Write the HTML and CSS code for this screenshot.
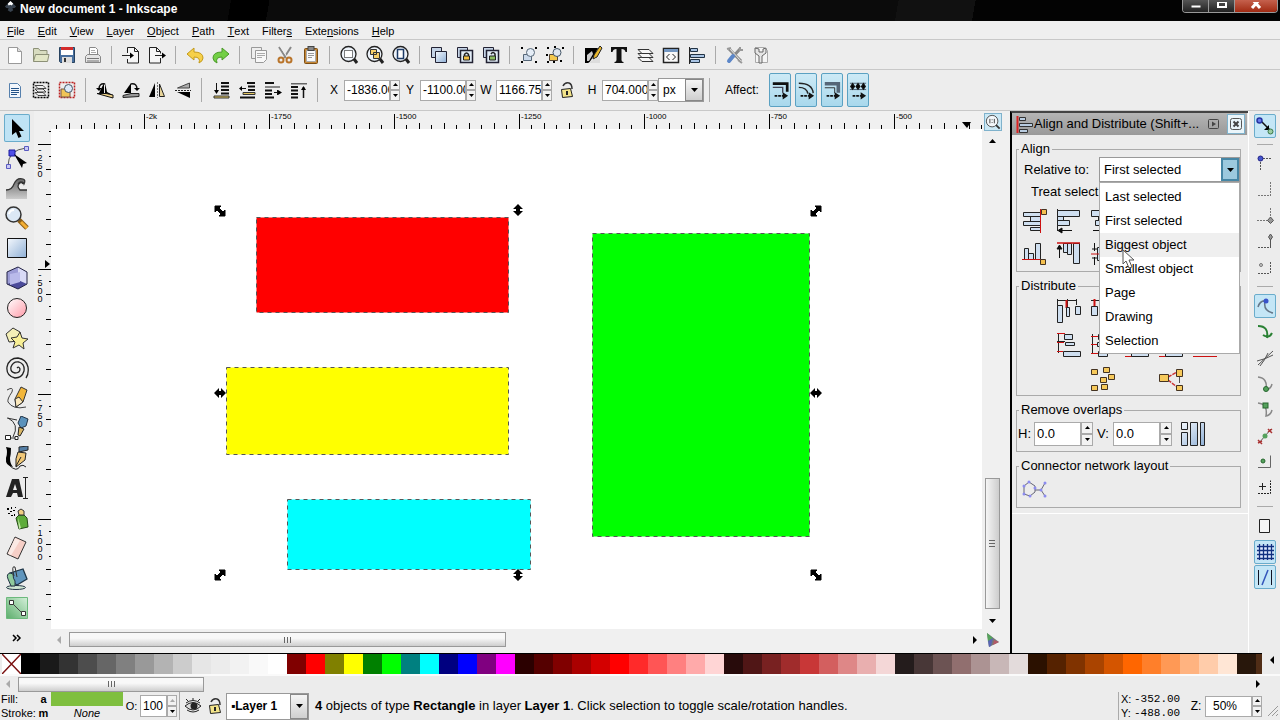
FILE: index.html
```html
<!DOCTYPE html>
<html lang="en">
<head>
<meta charset="utf-8">
<title>New document 1 - Inkscape</title>
<link rel="stylesheet" href="styles.css">
</head>
<body>
<svg class="defs" width="0" height="0" aria-hidden="true">
  <defs>
    <linearGradient id="gBlue" x1="0" y1="0" x2="1" y2="1"><stop offset="0" stop-color="#f4f8fd"/><stop offset="1" stop-color="#8fb0d6"/></linearGradient>
    <linearGradient id="gPink" x1="0" y1="0" x2="1" y2="1"><stop offset="0" stop-color="#fff"/><stop offset="1" stop-color="#ff9aa8"/></linearGradient>
    <linearGradient id="gGray" x1="0" y1="0" x2="0" y2="1"><stop offset="0" stop-color="#666"/><stop offset="1" stop-color="#ccc"/></linearGradient>
    <linearGradient id="gGreen" x1="0" y1="1" x2="1" y2="0"><stop offset="0" stop-color="#5cae6c"/><stop offset="1" stop-color="#d5f0da"/></linearGradient>
    <pattern id="hticks" x="93" y="0" width="125" height="18" patternUnits="userSpaceOnUse">
      <path d="M0 3h1v15h-1zM12 14h1v4h-1zM25 12h1v6h-1zM37 14h1v4h-1zM50 12h1v6h-1zM62 14h1v4h-1zM75 12h1v6h-1zM87 14h1v4h-1zM100 12h1v6h-1zM112 14h1v4h-1z"/>
    </pattern>
    <pattern id="vticks" x="0" y="15" width="17" height="125" patternUnits="userSpaceOnUse">
      <path d="M4 0h13v1h-13zM15 12h2v1h-2zM12 25h5v1h-5zM15 37h2v1h-2zM12 50h5v1h-5zM15 62h2v1h-2zM12 75h5v1h-5zM15 87h2v1h-2zM12 100h5v1h-5zM15 112h2v1h-2z"/>
    </pattern>
  </defs>
  <symbol id="logo" viewBox="0 0 14 14"><path d="M7 1L13 7Q12 9 9 9L10 11L7 13L4 11L5 9Q2 9 1 7z" fill="#39434f"/><path d="M7 1L10 4L8 6L7 5L5 6L4 4z" fill="#fff"/></symbol>
  <symbol id="new" viewBox="0 0 20 20"><path d="M3.500 2.500h9l4 4v12h-13z" fill="#fff" stroke="#999"/><path d="M12.500 2.500v4h4" fill="#ddd" stroke="#999"/></symbol>
  <symbol id="open" viewBox="0 0 20 20"><path d="M2.500 16.500v-13h5l1.500 2h7v4" fill="#d8dcc0" stroke="#8c9077"/><path d="M4.500 9.500h13.500l-1.500 7h-14z" fill="#e2e6c6" stroke="#8c9077"/></symbol>
  <symbol id="save" viewBox="0 0 20 20"><path d="M2.500 2.500h15v15h-14l-1-1z" fill="#486f9e" stroke="#27425f"/><path d="M4 2h12v8h-12z" fill="#fff"/><path d="M4 2h12v3h-12z" fill="#d32b2b"/><path d="M5 12h10v6h-10z" fill="#ddd"/><path d="M7 13h2v4h-2z" fill="#333"/></symbol>
  <symbol id="print" viewBox="0 0 20 20"><path d="M6.500 10v-7.500h6l2 2v5.500" fill="#fff" stroke="#888"/><path d="M8 5.500h4M8 7.500h5" stroke="#aaa"/><path d="M2.500 11.500l2-2h11l2 2v6h-15z" fill="#e5e5e5" stroke="#888"/><path d="M4 13.500h12M4 16h12" stroke="#777"/></symbol>
  <symbol id="import" viewBox="0 0 20 20"><path d="M6.500 8v-5.500h7l4 4v11.500h-11v-4" fill="#f5f5f5" stroke="#222"/><path d="M13.500 2.500v4h4M1 10.500h10" fill="none" stroke="#222"/><path d="M9 7.500l4 3l-4 3z"/></symbol>
  <symbol id="export" viewBox="0 0 20 20"><path d="M13.500 13v5h-11v-15.500h7l4 4v2" fill="#f5f5f5" stroke="#222"/><path d="M9.500 2.500v4h4M8 10.500h9" fill="none" stroke="#222"/><path d="M15 7.500l4 3l-4 3z"/></symbol>
  <symbol id="undo" viewBox="0 0 20 20"><path d="M2 9l7-6v4q9 0 9 6q0 3-4 5q2-6-5-6v3z" fill="#f6d04a" stroke="#c39a1a"/></symbol>
  <symbol id="redo" viewBox="0 0 20 20"><path d="M18 9l-7-6v4q-9 0-9 6q0 3 4 5q-2-6 5-6v3z" fill="#73cf45" stroke="#4a9a28"/></symbol>
  <symbol id="copy" viewBox="0 0 20 20"><path d="M2.500 2.500h10v11h-10z" fill="#eee" stroke="#999"/><path d="M6.500 5.500h11v9l-3 3h-8z" fill="#f8f8f8" stroke="#999"/><path d="M8 8.500h8M8 10.500h8M8 12.500h5" stroke="#aaa"/></symbol>
  <symbol id="cut" viewBox="0 0 20 20"><path d="M4 2l7 11M16 2l-7 11" stroke="#888" stroke-width="2"/><path d="M5 1l7 11" stroke="#eee"/><circle cx="6" cy="15" r="2.500" fill="none" stroke="#b9742a" stroke-width="2"/><circle cx="14" cy="15" r="2.500" fill="none" stroke="#b9742a" stroke-width="2"/></symbol>
  <symbol id="paste" viewBox="0 0 20 20"><rect x="3.500" y="3.500" width="13" height="15" rx="1" fill="#c48635" stroke="#7b4d13"/><path d="M5.500 5.500h9v11h-9z" fill="#fafafa" stroke="#aaa"/><path d="M7 8.500h6M7 10.500h6M7 12.500h4" stroke="#999"/><rect x="7" y="1.500" width="6" height="4" fill="#888" stroke="#444"/></symbol>
  <symbol id="lens" viewBox="0 0 20 20"><circle cx="9.500" cy="9" r="7.500" fill="#edf3fa" stroke="#222" stroke-width="1.300"/><path d="M15 14l3 4" stroke="#222" stroke-width="3"/></symbol>
  <symbol id="zoomsel" viewBox="0 0 20 20"><use href="#lens"/><rect x="5.500" y="5.500" width="8" height="7" fill="#fff" stroke="#000" stroke-dasharray="1 1"/></symbol>
  <symbol id="zoomdraw" viewBox="0 0 20 20"><use href="#lens"/><path d="M5.500 4.500h6v5h-6zM8.500 7.500h6v6h-6z" fill="#f7cf6b" stroke="#333"/></symbol>
  <symbol id="zoompage" viewBox="0 0 20 20"><use href="#lens"/><path d="M6.500 4.500h6v9h-6z" fill="#fff" stroke="#1d3b66" stroke-width="1.500"/></symbol>
  <symbol id="dup" viewBox="0 0 20 20"><path d="M2.500 2.500h10v10h-10z" fill="#c4d3e6" stroke="#223"/><path d="M6.500 6.500h11v11h-11z" fill="url(#gBlue)" stroke="#223"/></symbol>
  <symbol id="clone" viewBox="0 0 20 20"><path d="M2.500 2.500h10v10h-10z" fill="#c4d3e6" stroke="#223"/><path d="M5.500 5.500h12v12h-12z" fill="#e2ecf7" stroke="#223" stroke-width="1.500"/><path d="M9.500 11v-1.500q2-3 4 0v1.500" fill="none" stroke="#222" stroke-width="1.500"/><path d="M8.500 11h6v4h-6z" fill="#f0bd43" stroke="#222"/></symbol>
  <symbol id="unclone" viewBox="0 0 20 20"><path d="M2.500 2.500h10v10h-10z" fill="#c4d3e6" stroke="#223"/><path d="M5.500 5.500h12v12h-12z" fill="#e2ecf7" stroke="#223" stroke-width="1.500"/><path d="M10 9q2-3 4 0v2" fill="none" stroke="#222" stroke-width="1.500"/><path d="M8.500 11h6v4h-6z" fill="#8abb60" stroke="#222"/></symbol>
  <symbol id="group" viewBox="0 0 20 20"><path d="M2 2h2v2h-2zM16 2h2v2h-2zM2 16h2v2h-2zM16 16h2v2h-2z"/><path d="M4.500 9.500h8v6h-8z" fill="#cbd9ea" stroke="#567"/><circle cx="11.500" cy="7.500" r="4" fill="#e5edf6" stroke="#567"/></symbol>
  <symbol id="ungroup" viewBox="0 0 20 20"><path d="M2 2h2v2h-2zM9 1h2v2h-2zM17 2h2v2h-2zM2 16h2v2h-2zM8 16h2v2h-2zM15 15h2v2h-2zM1 9h2v2h-2z"/><path d="M4.500 9.500h8v6h-8z" fill="#f4c84d" stroke="#543"/><circle cx="12" cy="7.500" r="4" fill="#dfe6ef" stroke="#456"/></symbol>
  <symbol id="fill" viewBox="0 0 20 20"><path d="M2 3h13l-3 6l-6 9h-4z"/><path d="M4 10l5-4l1 3l-4 7h-2z" fill="#ccc"/><path d="M17 1l2 2l-5 9l-4 2l1-4z" fill="#eab92d" stroke="#222"/><path d="M5 18l12-7v7z" fill="#ddd"/></symbol>
  <symbol id="text" viewBox="0 0 20 20"><path d="M2 2h16v5h-1.500q-.5-3-4-3v11q0 2 2 2v1h-9v-1q2 0 2-2v-11q-3.500 0-4 3h-1.500z" fill="#111"/></symbol>
  <symbol id="layers" viewBox="0 0 20 20"><g fill="#f5f5f5" stroke="#333"><path d="M3 12.500h11l4 4h-11z"/><path d="M3 8.500h11l4 4h-11z"/><path d="M3 4.500h11l4 4h-11z"/></g></symbol>
  <symbol id="xml" viewBox="0 0 20 20"><path d="M2.500 3.500h15v14h-15z" fill="#f8f8f8" stroke="#222" stroke-width="1.500"/><path d="M3 4h14v3h-14z" fill="#7396c0"/><path d="M8.500 9l-3 3l3 3M11.500 9l3 3l-3 3" fill="none" stroke="#222"/></symbol>
  <symbol id="align" viewBox="0 0 20 20"><path d="M2.500 2v17" stroke="#222"/><g fill="#a9c4e4" stroke="#234"><path d="M3.500 3.500h7v3h-7zM3.500 9.500h14v3h-14zM3.500 14.500h9v3h-9z"/></g></symbol>
  <symbol id="prefs" viewBox="0 0 20 20"><path d="M4 4l12 12M15 4l-11 12" stroke="#888" stroke-width="3"/><path d="M4 3l12 13" stroke="#eee"/><path d="M8 11l-4 5" stroke="#5c87c9" stroke-width="4" stroke-linecap="round"/><path d="M15 2v3h3M13 15l4 3M2 4l4-1" fill="none" stroke="#999" stroke-width="2"/></symbol>
  <symbol id="docprefs" viewBox="0 0 20 20"><path d="M4.500 2.500h9l3 3v12h-12z" fill="#f5f5f5" stroke="#aaa"/><path d="M4 3v5l4 3v7h3v-7l4-3v-5l-3 1v3h-4v-3z" fill="#e5e5e5" stroke="#666"/></symbol>
  <symbol id="selall" viewBox="0 0 20 20"><path d="M4.500 3.500h8l3 3v11h-11z" fill="#f1f6fc" stroke="#5680ad"/><path d="M6 8.500h8M6 10.500h8M6 12.500h8M6 14.500h6" stroke="#225288"/></symbol>
  <symbol id="sellayer" viewBox="0 0 20 20"><rect x="2.500" y="2.500" width="15" height="15" fill="none" stroke="#000" stroke-width="1.500" stroke-dasharray="2 1"/><g fill="#eee" stroke="#444"><path d="M4 12.500h8l3 3h-8zM4 9h8l3 3h-8zM4 5.500h8l3 3h-8z"/></g></symbol>
  <symbol id="desel" viewBox="0 0 20 20"><rect x="2.500" y="2.500" width="15" height="15" fill="none" stroke="#b22" stroke-width="1.500" stroke-dasharray="2 1"/><path d="M4 9h9v8h-9z" fill="#f0c456" stroke="#754"/><circle cx="11.500" cy="8.500" r="4" fill="#dce9f8" stroke="#456"/></symbol>
  <symbol id="rotl" viewBox="0 0 20 20"><path d="M9 3v10h-5zM10 3l2 9l6 3l-8-1z"/><path d="M2 13.500h9l7 1.500v3z" fill="#f1d58a" stroke="#111"/><path d="M10 4q-6-1-6 5" fill="none" stroke="#111" stroke-width="1.500"/><path d="M1 8h6l-3 3z"/></symbol>
  <symbol id="rotr" viewBox="0 0 20 20"><path d="M10 3v10h-7z"/><path d="M2 17.500v-2l8-2h8v3z" fill="#999" stroke="#222"/><path d="M10 4q6-1 6 5" fill="none" stroke="#111" stroke-width="1.500"/><path d="M13 8h6l-3 3z"/></symbol>
  <symbol id="fliph" viewBox="0 0 20 20"><path d="M8 3v14h-6z"/><path d="M10.500 2v16" stroke="#777" stroke-dasharray="2 1"/><path d="M12.500 4v12.500h5z" fill="#e8d498" stroke="#222"/></symbol>
  <symbol id="flipv" viewBox="0 0 20 20"><path d="M16.500 3v5h-12z" fill="#aaa" stroke="#444"/><path d="M2 10.500h16" stroke="#222" stroke-dasharray="2 1"/><path d="M17 18v-6h-13z"/></symbol>
  <symbol id="bottom" viewBox="0 0 20 20"><path d="M10 3h8M10 6.500h8M10 10h8M10 13.500h8" stroke="#111" stroke-width="2"/><path d="M3 16h15v2h-15z" fill="#e3c75f" stroke="#333"/><path d="M5.500 3v9" stroke="#111"/><path d="M3 10h5l-2.500 4z"/></symbol>
  <symbol id="lower" viewBox="0 0 20 20"><path d="M10 3h8M11 6.500h7M11 10h7M3 17.500h15" stroke="#111" stroke-width="2"/><path d="M6 12.500h12v2h-12z" fill="#e3c75f" stroke="#333"/><path d="M4 8.500h5" stroke="#111"/><path d="M5 6l-3 2.500l3 2.500z"/></symbol>
  <symbol id="raise" viewBox="0 0 20 20"><path d="M2 3h9M2 10.500h7M2 14h7M2 17.500h9" stroke="#111" stroke-width="2"/><path d="M2 6h15v2h-15z" fill="#888"/><path d="M11 12.500h6M14.500 10v5" stroke="#111"/><path d="M15 10l4 2.500l-4 2.500z"/></symbol>
  <symbol id="top" viewBox="0 0 20 20"><path d="M2 7h7M2 10.500h7M2 14h7M2 17.500h7" stroke="#111" stroke-width="2"/><path d="M2 3h16v1.500h-16z" fill="#666"/><path d="M14.500 7v11" stroke="#111" stroke-width="1.500"/><path d="M12 10h5l-2.500-4z"/></symbol>
  <symbol id="lock" viewBox="0 0 20 20"><path d="M6 6q2-4 6-3q3 1 3 6" fill="none" stroke="#333" stroke-width="1.500"/><path d="M4.500 9.500l9-1l2 8l-10 1z" fill="#f4e58a" stroke="#222"/><path d="M10 11v4" stroke="#222" stroke-width="2"/></symbol>
  <symbol id="aff1" viewBox="0 0 20 24"><path d="M2 5h16v9" fill="none" stroke="#111" stroke-width="3"/><path d="M2 9h11v6" fill="none" stroke="#445" stroke-width="1.500"/><use href="#affarrow"/></symbol>
  <symbol id="aff2" viewBox="0 0 20 24"><path d="M2 4.500q15 0 16 11M2 9q9 0 10 7" fill="none" stroke="#222" stroke-width="1.500"/><use href="#affarrow"/></symbol>
  <symbol id="aff3" viewBox="0 0 20 24"><path d="M2 5h15v10" fill="none" stroke="#567" stroke-width="4"/><path d="M2 9.500h11v6" fill="none" stroke="#222"/><use href="#affarrow"/></symbol>
  <symbol id="aff4" viewBox="0 0 20 24"><path d="M1 4.500h18M1 11.500h18" stroke="#456"/><path d="M4 5l2 3l-2 3l-2-3zM10 5l2 3l-2 3l-2-3zM16 5l2 3l-2 3l-2-3z" stroke="#111" stroke-width="1.500"/><use href="#affarrow"/></symbol>
  <symbol id="affarrow" viewBox="0 0 20 24"><path d="M4 18.500h10" stroke="#111" stroke-width="2" stroke-dasharray="3 1"/><path d="M13 14.500l6 4l-6 4z" fill="#111"/></symbol>

  <symbol id="tselect" viewBox="0 0 24 24"><path d="M7 3v16l4-3l2.500 6l3-1.500l-2.500-5.500h5z"/></symbol>
  <symbol id="tnode" viewBox="0 0 24 24"><path d="M3 20q0-16 18-18" fill="none" stroke="#555"/><path d="M1.500 18.500h4v4h-4zM19.500 .5h4v4h-4z" fill="#c9c9f4" stroke="#5a5ac0"/><path d="M4 4h6v6h-6z" fill="#5151e8" stroke="#1a1a9d"/><path d="M9 8l13 9l-4 1l-1 4z"/></symbol>
  <symbol id="ttweak" viewBox="0 0 24 24"><path d="M1 14q6 0 8-6q3-7 9-5q3 1 1 5q-1-3-4-1q-4 3 0 7h7v9h-21z" fill="url(#gGray)"/><path d="M1 14q6 0 8-6q3-7 9-5q3 1 1 5q-1-3-4-1q-4 3 0 7h7M13 8q3-4 5 0" fill="none" stroke="#333" stroke-width="1.300"/></symbol>
  <symbol id="tzoom" viewBox="0 0 24 24"><path d="M14 14l8 8" stroke="#8b5d16" stroke-width="5"/><path d="M16 16l6 6" stroke="#f3ae33" stroke-width="3"/><circle cx="8.500" cy="8.500" r="7.500" fill="#dce8f5" stroke="#333" stroke-width="1.500"/><path d="M4 8q1-4 5-4" fill="none" stroke="#fff" stroke-width="2"/></symbol>
  <symbol id="trect" viewBox="0 0 24 24"><path d="M2.500 2.500h19v19h-19z" fill="url(#gBlue)" stroke="#111"/></symbol>
  <symbol id="tbox" viewBox="0 0 24 24"><path d="M2 6l11-5v13l-11 4z" fill="#9d9dd6"/><path d="M13 1l9 5v12l-9-4z" fill="#d9daf6"/><path d="M2 18l11-4l9 4l-9 5z" fill="#4c4b9b"/><path d="M5 8l10-2v10l-10 3z" fill="#b9baea"/><path d="M13 1l9 5v12l-9 5l-11-5v-12z" fill="none" stroke="#224"/></symbol>
  <symbol id="tcircle" viewBox="0 0 24 24"><circle cx="12" cy="12" r="9.500" fill="url(#gPink)" stroke="#222"/></symbol>
  <symbol id="tstar" viewBox="0 0 24 24"><path d="M8 2l7 4l-2 9l-9 1l-3-8z" fill="#f4efb7" stroke="#333"/><path d="M15 6l2 6l6 1l-5 4l1 6l-5-4l-6 3l2-6l-4-4l6-1z" fill="#f8ef94" stroke="#333"/></symbol>
  <symbol id="tspiral" viewBox="0 0 24 24"><path d="M12 12q2-2 3 1q0 4-5 4q-5-1-4-6q2-6 8-5q6 2 5 9q-2 7-9 7q-9-2-8-11q2-9 11-9q8 1 10 9q1 7-2 11" fill="none" stroke="#222" stroke-width="1.300"/></symbol>
  <symbol id="tpencil" viewBox="0 0 24 24"><path d="M2 4q7-4 5 2q-5 7-4 10q5 8 18 5" fill="none" stroke="#444"/><path d="M16 1l6 3l-4 12l-7 5l-1-8z" fill="#f2b63a" stroke="#333"/><path d="M10 13l4-2l4 5l-7 5z" fill="#fbe8bc" stroke="#333"/></symbol>
  <symbol id="tpen" viewBox="0 0 24 24"><path d="M2 2l10 2M3 2q12 6 5 19M3 22h9" fill="none" stroke="#333"/><path d="M.5 19.500h5v4h-5zM10 20.500h3v3h-3z" fill="#fff" stroke="#222"/><path d="M16 0l7 3l-2 7l-5 2l-3-5z" fill="#5b92bb" stroke="#234"/><path d="M14 11l5 2l-4 7l-2-1z" fill="#d9b665" stroke="#222"/></symbol>
  <symbol id="tcallig" viewBox="0 0 24 24"><path d="M1 1l5 1q0 6-1 10q0 6 3 9q-8-1-7-9q2-6 0-11z"/><path d="M4 19q8 8 11 1q3-2 6 1" fill="none" stroke="#222"/><path d="M14 1l9-1v4l-9 2z" fill="#547ea5" stroke="#222"/><path d="M13 6l8 1l-1 7l-9 7q-1-9 2-15z" fill="#f1c878" stroke="#222"/><path d="M11 20l5-9" stroke="#222"/></symbol>
  <symbol id="ttext" viewBox="0 0 24 24"><path d="M7 3h7l4 18h-5l-1-4h-4l-2 4h-5zM10 8l-2 6h4z" fill="#222" fill-rule="evenodd"/><path d="M18 1.500h5M20.500 2v20M18 22.500h5" stroke="#222"/></symbol>
  <symbol id="tspray" viewBox="0 0 24 24"><path d="M2 2h2v2h-2zM6 1h1v2h-1zM3 7h2v1h-2zM8 4h2v1h-2zM5 5h2v1h-2zM9 8h1v2h-1zM6 9h2v1h-2zM10 1h1v1h-1z"/><path d="M11 12l3-3h5l3 3l1 9l-9 2z" fill="#5eac3b" stroke="#254b18"/><path d="M13 12l3 10l-2 1z" fill="#c4eaa8"/><path d="M13 5l3-2l3 2v4h-5z" fill="#f1cf83" stroke="#333"/></symbol>
  <symbol id="teraser" viewBox="0 0 24 24"><path d="M10 1l11 5l-8 17l-11-5z" fill="#f6cfc7" stroke="#333"/><path d="M10 2l5 2.500l-9 15l-3-2z" fill="#fbe9e4"/></symbol>
  <symbol id="tbucket" viewBox="0 0 24 24"><ellipse cx="11" cy="21.500" rx="9.500" ry="2" fill="#cfe6d3" stroke="#234"/><path d="M5 7l13-4l4 10l-10 6q-6-3-7-12z" fill="#5f95bd" stroke="#1e3547" stroke-width="1.300"/><path d="M5 7q-4 1-2 6l3 7h4q0-3 0-5q-2-2-2-7z" fill="#8fcb9c" stroke="#234"/><path d="M9 10q-3-11 1-9l2 10" fill="none" stroke="#333"/></symbol>
  <symbol id="tconn" viewBox="0 0 24 24"><path d="M1.500 1.500h21v21h-21z" fill="url(#gGreen)" stroke="#6cb97c"/><path d="M7 7l10 10" stroke="#444"/><path d="M4.500 4.500h4v4h-4zM16.500 15.500h4v4h-4z" fill="#fff" stroke="#333"/></symbol>

  <symbol id="snap" viewBox="0 0 20 20"><path d="M6 5l9 9" stroke="#111" stroke-width="1.500"/><path d="M14 9v5h-5z"/><circle cx="4.500" cy="4.500" r="2.500" fill="#6a7de8" stroke="#2534a2" stroke-width="1.500"/><circle cx="15.500" cy="15.500" r="2.500" fill="#9ccda4" stroke="#387747"/></symbol>
  <symbol id="s1" viewBox="0 0 20 20"><path d="M5.500 5v12M5 4.500h12" stroke="#555" stroke-dasharray="2 1"/><circle cx="5.500" cy="4.500" r="2.500" fill="#45c" stroke="#228"/></symbol>
  <symbol id="s2" viewBox="0 0 20 20"><path d="M3 15.500h12M15.500 2v14" stroke="#777" stroke-dasharray="2 1"/></symbol>
  <symbol id="s3" viewBox="0 0 20 20"><path d="M2 14.500h13M15.500 2v13" stroke="#777" stroke-dasharray="2 1"/><path d="M15.500 11l3 3.500l-3 3l-3-3z" fill="#999" stroke="#555"/></symbol>
  <symbol id="s4" viewBox="0 0 20 20"><path d="M3 15.500h12" stroke="#555" stroke-dasharray="2 1"/><path d="M15.500 7v9" stroke="#555"/><path d="M15.500 2l2 3l-2 3l-2-3z" fill="#999" stroke="#555"/></symbol>
  <symbol id="s5" viewBox="0 0 20 20"><path d="M3 15.500h12M15.500 4v12" stroke="#555" stroke-dasharray="2 1"/><circle cx="6" cy="7" r="1.500" fill="#ccc" stroke="#777"/></symbol>
  <symbol id="s6" viewBox="0 0 20 20"><path d="M3 11q2-7 8-6M10 5q-2 10 8 12" fill="none" stroke="#678" stroke-width="1.500"/><circle cx="11" cy="5" r="2.500" fill="#3953ca"/></symbol>
  <symbol id="s7" viewBox="0 0 20 20"><path d="M3 4q11 0 9 12M8 13q6 4 9-2" fill="none" stroke="#2a8134" stroke-width="2"/></symbol>
  <symbol id="s8" viewBox="0 0 20 20"><path d="M3 17l15-14M2 13q9-2 16-6M5 18q5-6 8-13" fill="none" stroke="#555"/></symbol>
  <symbol id="s9" viewBox="0 0 20 20"><path d="M3 3q10 1 8 13q5-1 6-6" fill="none" stroke="#888" stroke-width="1.500"/><circle cx="11" cy="15" r="2.500" fill="#54a15c" stroke="#27662e"/></symbol>
  <symbol id="s10" viewBox="0 0 20 20"><path d="M3 3q10 1 8 13q5-1 6-6" fill="none" stroke="#888" stroke-width="1.500"/><rect x="8" y="3" width="5" height="5" fill="#54a15c" stroke="#27662e"/></symbol>
  <symbol id="s11" viewBox="0 0 20 20"><path d="M4 17l12-14" stroke="#555"/><path d="M3 14l4 4M3 17l4-2M13 3l4 4M13 6l4-3" stroke="#a33" stroke-width="1.500"/><circle cx="10" cy="10" r="2.500" fill="#54a15c"/></symbol>
  <symbol id="s12" viewBox="0 0 20 20"><path d="M3 15.500h12.500v-12" fill="none" stroke="#666"/><circle cx="8" cy="9" r="2" fill="#54a15c" stroke="#27662e"/></symbol>
  <symbol id="s13" viewBox="0 0 20 20"><path d="M3 15.500h12.500v-13" fill="none" stroke="#222" stroke-dasharray="2 1"/><path d="M4 8.500h7M7.500 5v7" stroke="#222"/></symbol>
  <symbol id="s14" viewBox="0 0 20 20"><path d="M4.500 3.500h10v13h-10z" fill="#f5f5f5" stroke="#222"/></symbol>
  <symbol id="s15" viewBox="0 0 20 20"><path d="M2 3h16v15h-16z" fill="#dfe9ff"/><path d="M4.500 2v16M8.500 2v16M12.500 2v16M16.500 2v16M2 4.500h17M2 8.500h17M2 12.500h17M2 16.500h17" stroke="#103080" stroke-width="1.300"/></symbol>
  <symbol id="s16" viewBox="0 0 20 20"><path d="M3.500 3v15M16.500 3v15" stroke="#112"/><path d="M7 18l6-15" stroke="#35b" stroke-width="1.500"/></symbol>

  <symbol id="a1" viewBox="0 0 26 26"><g fill="#cfdff0" stroke="#222"><path d="M1.500 4.500h17v4h-17zM8.500 8.500h10v5h-10zM1.500 13.500h17v4h-17zM8.500 19.500h10v3h-10z"/></g><path d="M18.500 1v24" stroke="#c11"/><path d="M19.500 1.500h5v5h-5z" fill="#f4c04e" stroke="#432"/></symbol>
  <symbol id="a2" viewBox="0 0 26 26"><path d="M1.500 1v22" stroke="#222"/><g fill="#cfdff0" stroke="#222"><path d="M1.500 2.500h22v6h-22zM1.500 8.500h6v4h-6zM1.500 12.500h12v5h-12z"/></g><path d="M3 22.500h13M6 20l-4 2.500l4 2.500z" stroke="#111"/></symbol>
  <symbol id="a3" viewBox="0 0 26 26"><path d="M12.500 1v24" stroke="#c11"/><g fill="#cfdff0" stroke="#222"><path d="M1.500 2.500h22v6h-22zM8.500 8.500h8v4h-8zM5.500 12.500h14v5h-14z"/></g><path d="M3 22.500h20" stroke="#111"/></symbol>
  <symbol id="a4" viewBox="0 0 26 26"><g fill="#cfdff0" stroke="#222"><path d="M2.500 7.500h4v11h-4zM6.500 12.500h5v6h-5zM13.500 2.500h5v16h-5z"/></g><path d="M0 18.500h20" stroke="#c11"/><path d="M18.500 18.500h5v5h-5z" fill="#f4c04e" stroke="#432"/></symbol>
  <symbol id="a5" viewBox="0 0 26 26"><g fill="#cfdff0" stroke="#222"><path d="M7.500 2.500h4v9h-4zM11.500 2.500h4v11h-4zM17.500 2.500h6v20h-6z"/></g><path d="M1 2h23" stroke="#c11" stroke-width="1.500"/><path d="M3.500 5v12M1 8l2.500-4l2.500 4z" stroke="#111"/></symbol>
  <symbol id="a6" viewBox="0 0 26 26"><g fill="#cfdff0" stroke="#222"><path d="M7.500 6.500h5v13h-5zM17.500 2.500h5v20h-5z"/></g><path d="M1 13h23" stroke="#c11"/><path d="M4.500 2v8M4.500 16v8M2 8h5M2 17h5" stroke="#111"/></symbol>
  <symbol id="d1" viewBox="0 0 26 26"><path d="M1.500 1v8M11.500 1v8M20.500 1v6M1 2.500h19" stroke="#222"/><path d="M10.500 2v8" stroke="#c11" stroke-width="2"/><g fill="#cfdff0" stroke="#222"><path d="M1.500 7.500h5v17h-5zM10.500 9.500h3v9h-3zM19.500 8.500h5v8h-5z"/></g></symbol>
  <symbol id="d2" viewBox="0 0 26 26"><path d="M1 2.500h22M20.500 1v8" stroke="#222"/><path d="M4.500 1v12" stroke="#c11" stroke-width="2"/><g fill="#cfdff0" stroke="#222"><path d="M1.500 8.500h6v9h-6zM17.500 8.500h6v14h-6z"/></g></symbol>
  <symbol id="d3" viewBox="0 0 26 26"><path d="M2.500 1v20M1 1.500h6M1 9.500h8" stroke="#222"/><path d="M1 1.500h8M1 10.500h7M1 19.500h6" stroke="#c11"/><g fill="#cfdff0" stroke="#222"><path d="M8.500 2.500h8v5h-8zM9.500 10.500h9v3h-9zM7.500 19.500h17v5h-17z"/></g></symbol>
  <symbol id="d4" viewBox="0 0 26 26"><path d="M2.500 2v20" stroke="#222"/><path d="M1 4.500h22M1 12.500h22M1 21.500h22" stroke="#c11"/><g fill="#cfdff0" stroke="#222"><path d="M8.500 2.500h8v5h-8zM7.500 10.500h9v4h-9zM8.500 19.500h9v5h-9z"/></g></symbol>
  <symbol id="d5" viewBox="0 0 26 26"><path d="M1 24.500h8" stroke="#c11"/><path d="M7.500 19.500h17v5h-17z" fill="#cfdff0" stroke="#222"/></symbol>
  <symbol id="d6" viewBox="0 0 26 26"><path d="M1 24.500h24" stroke="#c11"/></symbol>
  <symbol id="rnd" viewBox="0 0 26 26"><g fill="#f6c95b" stroke="#432"><path d="M1.500 3.500h6v5h-6zM13.500 1.500h6v5h-6zM18.500 8.500h6v5h-6zM10.500 11.500h6v5h-6zM1.500 19.500h6v5h-6zM11.500 18.500h6v5h-6z"/></g></symbol>
  <symbol id="uncl" viewBox="0 0 26 26"><path d="M10 11l9-5M10 14l9 7" stroke="#c33" stroke-width="1.500" stroke-dasharray="4 1"/><path d="M21.500 11v6" stroke="#555"/><g fill="#f6c95b" stroke="#432"><path d="M1.500 8.500h9v7h-9zM18.500 3.500h6v7h-6zM18.500 19.500h6v5h-6z"/></g></symbol>
  <symbol id="ovl" viewBox="0 0 26 26"><g fill="url(#gBlue)" stroke="#222"><path d="M1.500 1.500h6v7h-6zM1.500 11.500h6v13h-6zM10.500 1.500h7v23h-7zM20.500 1.500h4v23h-4z"/></g></symbol>
  <symbol id="net" viewBox="0 0 26 26"><path d="M2 9l5-4l6 4v6l-5 4l-6-2zM13 13h6l4-7M19 13l4 6" fill="none" stroke="#667"/><g fill="#8c8cf0"><circle cx="2" cy="9" r="1.500"/><circle cx="7" cy="5" r="1.500"/><circle cx="13" cy="11" r="1.500"/><circle cx="8" cy="19" r="1.500"/><circle cx="2" cy="17" r="1.500"/><circle cx="19" cy="13" r="1.500"/><circle cx="23" cy="6" r="1.500"/><circle cx="23" cy="19" r="1.500"/></g></symbol>
  <symbol id="eye" viewBox="0 0 20 20"><path d="M2 10q8-7 16 0q-8 8-16 0z" fill="#ddd" stroke="#222"/><circle cx="11" cy="10" r="3.500" fill="#222"/><path d="M3 7q7-5 14 0M4 14q6 4 12 0M5 5l-2-2M10 4v-2M15 5l2-2" fill="none" stroke="#222"/></symbol>
  <symbol id="up" viewBox="0 0 7 4"><path d="M3.500 0L7 4H0z"/></symbol>
  <symbol id="down" viewBox="0 0 7 4"><path d="M0 0H7L3.500 4z"/></symbol>
  <symbol id="left" viewBox="0 0 4 8"><path d="M4 0V8L0 4z"/></symbol>
  <symbol id="right" viewBox="0 0 4 8"><path d="M0 0V8L4 4z"/></symbol>
</svg>

<header class="titlebar">
  <svg class="logo"><use href="#logo"/></svg>
  <h1>New document 1 - Inkscape</h1>
  <div class="winbtns">
    <button aria-label="Minimize"><svg width="12" height="8"><path d="M1.500 3.500h9v2h-9z" fill="#fff"/></svg></button>
    <button aria-label="Maximize"><svg width="12" height="8"><path d="M2 0h8v5h-8z" fill="none" stroke="#fff" stroke-width="2"/></svg></button>
    <button class="close" aria-label="Close"><svg width="14" height="8"><path d="M3 -3l8 9M11 -3l-8 9" stroke="#fff" stroke-width="3"/></svg></button>
  </div>
</header>

<nav class="menubar">
  <button><u>F</u>ile</button><button><u>E</u>dit</button><button><u>V</u>iew</button><button><u>L</u>ayer</button><button><u>O</u>bject</button><button><u>P</u>ath</button><button><u>T</u>ext</button><button>Filter<u>s</u></button><button>Exte<u>n</u>sions</button><button><u>H</u>elp</button>
</nav>

<div class="toolbar commands">
  <button aria-label="New"><svg><use href="#new"/></svg></button>
  <button aria-label="Open"><svg><use href="#open"/></svg></button>
  <button aria-label="Save"><svg><use href="#save"/></svg></button>
  <button aria-label="Print"><svg><use href="#print"/></svg></button>
  <i class="sep"></i>
  <button aria-label="Import"><svg><use href="#import"/></svg></button>
  <button aria-label="Export"><svg><use href="#export"/></svg></button>
  <i class="sep"></i>
  <button aria-label="Undo"><svg><use href="#undo"/></svg></button>
  <button aria-label="Redo"><svg><use href="#redo"/></svg></button>
  <i class="sep"></i>
  <button aria-label="Copy"><svg><use href="#copy"/></svg></button>
  <button aria-label="Cut"><svg><use href="#cut"/></svg></button>
  <button aria-label="Paste"><svg><use href="#paste"/></svg></button>
  <i class="sep"></i>
  <button aria-label="Zoom selection"><svg><use href="#zoomsel"/></svg></button>
  <button aria-label="Zoom drawing"><svg><use href="#zoomdraw"/></svg></button>
  <button aria-label="Zoom page"><svg><use href="#zoompage"/></svg></button>
  <i class="sep"></i>
  <button aria-label="Duplicate"><svg><use href="#dup"/></svg></button>
  <button aria-label="Clone"><svg><use href="#clone"/></svg></button>
  <button aria-label="Unlink clone"><svg><use href="#unclone"/></svg></button>
  <i class="sep"></i>
  <button aria-label="Group"><svg><use href="#group"/></svg></button>
  <button aria-label="Ungroup"><svg><use href="#ungroup"/></svg></button>
  <i class="sep"></i>
  <button aria-label="Fill and stroke"><svg><use href="#fill"/></svg></button>
  <button aria-label="Text and font"><svg><use href="#text"/></svg></button>
  <button aria-label="Layers"><svg><use href="#layers"/></svg></button>
  <button aria-label="XML editor"><svg><use href="#xml"/></svg></button>
  <button aria-label="Align and distribute"><svg><use href="#align"/></svg></button>
  <i class="sep"></i>
  <button aria-label="Preferences"><svg><use href="#prefs"/></svg></button>
  <button aria-label="Document properties"><svg><use href="#docprefs"/></svg></button>
</div>

<div class="toolbar controls">
  <button aria-label="Select all"><svg><use href="#selall"/></svg></button>
  <button aria-label="Select all in all layers"><svg><use href="#sellayer"/></svg></button>
  <button aria-label="Deselect"><svg><use href="#desel"/></svg></button>
  <i class="sep"></i>
  <button aria-label="Rotate left"><svg><use href="#rotl"/></svg></button>
  <button aria-label="Rotate right"><svg><use href="#rotr"/></svg></button>
  <button aria-label="Flip horizontal"><svg><use href="#fliph"/></svg></button>
  <button aria-label="Flip vertical"><svg><use href="#flipv"/></svg></button>
  <i class="sep"></i>
  <button aria-label="Lower to bottom"><svg><use href="#bottom"/></svg></button>
  <button aria-label="Lower"><svg><use href="#lower"/></svg></button>
  <button aria-label="Raise"><svg><use href="#raise"/></svg></button>
  <button aria-label="Raise to top"><svg><use href="#top"/></svg></button>
  <i class="sep"></i>
  <label for="fx">X</label>
  <span class="spin"><input id="fx" value="-1836.00"><span class="steps"><button aria-label="Increase X"><svg><use href="#up"/></svg></button><button aria-label="Decrease X"><svg><use href="#down"/></svg></button></span></span>
  <label for="fy">Y</label>
  <span class="spin"><input id="fy" value="-1100.00"><span class="steps"><button aria-label="Increase Y"><svg><use href="#up"/></svg></button><button aria-label="Decrease Y"><svg><use href="#down"/></svg></button></span></span>
  <label for="fw">W</label>
  <span class="spin"><input id="fw" value="1166.75"><span class="steps"><button aria-label="Increase width"><svg><use href="#up"/></svg></button><button aria-label="Decrease width"><svg><use href="#down"/></svg></button></span></span>
  <button class="ratio" aria-label="Lock ratio"><svg><use href="#lock"/></svg></button>
  <label for="fh">H</label>
  <span class="spin"><input id="fh" value="704.000"><span class="steps"><button aria-label="Increase height"><svg><use href="#up"/></svg></button><button aria-label="Decrease height"><svg><use href="#down"/></svg></button></span></span>
  <span class="combo units"><select aria-label="Units"><option>px</option></select><span class="drop"><svg><use href="#down"/></svg></span></span>
  <i class="sep"></i>
  <span class="affect">Affect:</span>
  <button class="toggle" aria-label="Scale stroke width"><svg><use href="#aff1"/></svg></button>
  <button class="toggle" aria-label="Scale rounded corners"><svg><use href="#aff2"/></svg></button>
  <button class="toggle" aria-label="Move gradients"><svg><use href="#aff3"/></svg></button>
  <button class="toggle" aria-label="Move patterns"><svg><use href="#aff4"/></svg></button>
</div>

<main class="main">
  <div class="toolbox">
    <button class="on" aria-label="Select"><svg><use href="#tselect"/></svg></button>
    <button aria-label="Node"><svg><use href="#tnode"/></svg></button>
    <button aria-label="Tweak"><svg><use href="#ttweak"/></svg></button>
    <button aria-label="Zoom"><svg><use href="#tzoom"/></svg></button>
    <button aria-label="Rectangle"><svg><use href="#trect"/></svg></button>
    <button aria-label="3D box"><svg><use href="#tbox"/></svg></button>
    <button aria-label="Ellipse"><svg><use href="#tcircle"/></svg></button>
    <button aria-label="Star"><svg><use href="#tstar"/></svg></button>
    <button aria-label="Spiral"><svg><use href="#tspiral"/></svg></button>
    <button aria-label="Pencil"><svg><use href="#tpencil"/></svg></button>
    <button aria-label="Pen"><svg><use href="#tpen"/></svg></button>
    <button aria-label="Calligraphy"><svg><use href="#tcallig"/></svg></button>
    <button aria-label="Text"><svg><use href="#ttext"/></svg></button>
    <button aria-label="Spray"><svg><use href="#tspray"/></svg></button>
    <button aria-label="Eraser"><svg><use href="#teraser"/></svg></button>
    <button aria-label="Paint bucket"><svg><use href="#tbucket"/></svg></button>
    <button aria-label="Connector"><svg><use href="#tconn"/></svg></button>
    <button aria-label="More tools"><svg class="more" viewBox="0 0 10 8"><path d="M1 1l3 3l-3 3M5 1l3 3l-3 3" fill="none" stroke="#000" stroke-width="1.500"/></svg></button>
  </div>

  <section class="workspace">
    <div></div>
    <svg class="ruler">
      <rect width="100%" height="18" fill="url(#hticks)"/>
      <text x="95" y="8">-2k</text><text x="220" y="8">-1750</text><text x="345" y="8">-1500</text><text x="470" y="8">-1250</text><text x="595" y="8">-1000</text><text x="720" y="8">-750</text><text x="845" y="8">-500</text>
      <path d="M911 11h9l-4 6z"/>
    </svg>
    <button class="zoom1" aria-label="Zoom 1:1"><svg viewBox="0 0 18 18"><circle cx="8" cy="8" r="6.500" fill="#f3f7fa" stroke="#444"/><path d="M12.500 12.500l4 4" stroke="#333" stroke-width="2"/><path d="M5.500 5.500v5M10.500 5.500v5M8 6v1M8 9v1" stroke="#333"/></svg></button>
    <svg class="ruler tall">
      <rect width="17" height="100%" fill="url(#vticks)"/>
      <g text-anchor="middle">
        <text><tspan x="6" y="24">-</tspan><tspan x="6" y="32">2</tspan><tspan x="6" y="40">5</tspan><tspan x="6" y="48">0</tspan></text>
        <text><tspan x="6" y="149">-</tspan><tspan x="6" y="157">5</tspan><tspan x="6" y="165">0</tspan><tspan x="6" y="173">0</tspan></text>
        <text><tspan x="6" y="274">-</tspan><tspan x="6" y="282">7</tspan><tspan x="6" y="290">5</tspan><tspan x="6" y="298">0</tspan></text>
        <text><tspan x="6" y="399">-</tspan><tspan x="6" y="407">1</tspan><tspan x="6" y="415">0</tspan><tspan x="6" y="423">0</tspan><tspan x="6" y="431">0</tspan></text>
      </g>
      <path d="M11 131v8l5-4z"/>
    </svg>
    <svg class="canvas">
      <defs>
        <path id="harrow" d="M-6 0l5-5v3h2v-3l5 5l-5 5v-3h-2v3z"/>
        <path id="darrow" d="M-5 -5h6l-2 2l4 4l2-2v6h-6l2-2l-4-4l-2 2z"/>
      </defs>
      <g>
        <path d="M205.500 88.500h252v95h-252z" fill="#f00"/>
        <path d="M175.500 238.500h282v87h-282z" fill="#ff0"/>
        <path d="M236.500 370.500h243v70h-243z" fill="#0ff"/>
        <path d="M541.500 104.500h217v303h-217z" fill="#0f0"/>
        <path d="M205.500 88.500h252v95h-252zM175.500 238.500h282v87h-282zM236.500 370.500h243v70h-243zM541.500 104.500h217v303h-217z" fill="none" stroke="#555" stroke-dasharray="4 4"/>
      </g>
      <g stroke="#000">
        <use href="#darrow" transform="translate(169 82)"/>
        <use href="#darrow" transform="translate(765 82) rotate(90)"/>
        <use href="#darrow" transform="translate(169 446) rotate(90)"/>
        <use href="#darrow" transform="translate(765 446)"/>
      </g>
      <use href="#harrow" transform="translate(467 81) rotate(90)"/>
      <use href="#harrow" transform="translate(169 264)"/>
      <use href="#harrow" transform="translate(765 264)"/>
      <use href="#harrow" transform="translate(467 446) rotate(90)"/>
    </svg>
    <div class="vscroll">
      <svg class="v"><use href="#up"/></svg>
      <div class="vtrack"><div class="vthumb"><i></i></div></div>
      <svg class="v"><use href="#down"/></svg>
    </div>
    <div></div>
    <div class="hscroll">
      <svg class="h dim"><use href="#left"/></svg>
      <div class="htrack"><div class="hthumb"><i></i></div></div>
      <svg class="h"><use href="#right"/></svg>
    </div>
    <svg class="cms" viewBox="0 0 16 16"><path d="M2 1l12 9l-10 5z" fill="#777"/><path d="M2 1l6 5l-5 4z" fill="#55a35b"/><path d="M3 9l5-3l-2 8l-2 1z" fill="#5a66b5"/><path d="M9 8l5 2l-6 3z" fill="#b45a68"/></svg>
  </section>

  <aside class="dock">
    <header class="docktitle">
      <svg class="dicon" viewBox="0 0 17 17"><path d="M1.500 0v17" stroke="#d22" stroke-width="2"/><path d="M3.500 1.500h6v3h-6zM3.500 7.500h13v3h-13zM3.500 13.500h8v3h-8z" fill="#b9cce0" stroke="#333"/></svg>
      <h2>Align and Distribute (Shift+...</h2>
      <button class="iconify" aria-label="Iconify"><svg viewBox="0 0 12 12"><rect x=".5" y="1.500" width="10" height="9" rx="1" fill="none" stroke="#444"/><path d="M4 3.500l4 2.500l-4 2.500z" fill="#444"/></svg></button>
      <button class="dclose" aria-label="Close dialog"><svg viewBox="0 0 12 12"><rect x=".5" y=".5" width="11" height="11" rx="2" fill="none" stroke="#555"/><path d="M3.500 3.500l5 5M8.500 3.500l-5 5" stroke="#444" stroke-width="2"/></svg></button>
    </header>
    <div class="dockbody">
      <fieldset>
        <legend>Align</legend>
        <div class="relative">
          <label for="rel">Relative to:</label>
          <div class="picker">
            <span class="combo"><select id="rel"><option>First selected</option></select><span class="drop hot"><svg><use href="#down"/></svg></span></span>
            <ul class="popup">
              <li>Last selected</li><li>First selected</li><li class="hover">Biggest object</li><li>Smallest object</li><li>Page</li><li>Drawing</li><li>Selection</li>
            </ul>
            <svg class="cursor" viewBox="0 0 14 20"><path d="M1 1v14l3-3l3 7l3-1l-3-7h5z" fill="#fff" stroke="#555"/></svg>
          </div>
        </div>
        <p class="treat">Treat select</p>
        <div class="grid">
          <button aria-label="Align right to left"><svg><use href="#a1"/></svg></button>
          <button aria-label="Align left"><svg><use href="#a2"/></svg></button>
          <button aria-label="Align center"><svg><use href="#a3"/></svg></button>
        </div>
        <div class="grid">
          <button aria-label="Align bottom to top"><svg><use href="#a4"/></svg></button>
          <button aria-label="Align top"><svg><use href="#a5"/></svg></button>
          <button aria-label="Align middle"><svg><use href="#a6"/></svg></button>
        </div>
      </fieldset>
      <fieldset>
        <legend>Distribute</legend>
        <div class="grid inset">
          <button aria-label="Distribute left"><svg><use href="#d1"/></svg></button>
          <button aria-label="Distribute centers"><svg><use href="#d2"/></svg></button>
        </div>
        <div class="grid inset">
          <button aria-label="Distribute top"><svg><use href="#d3"/></svg></button>
          <button aria-label="Distribute middles"><svg><use href="#d4"/></svg></button>
          <button aria-label="Distribute bottom"><svg><use href="#d5"/></svg></button>
          <button aria-label="Even gaps"><svg><use href="#d5"/></svg></button>
          <button aria-label="Baselines"><svg><use href="#d6"/></svg></button>
        </div>
        <div class="grid spread">
          <button aria-label="Randomize"><svg><use href="#rnd"/></svg></button>
          <button aria-label="Unclump"><svg><use href="#uncl"/></svg></button>
        </div>
      </fieldset>
      <fieldset>
        <legend>Remove overlaps</legend>
        <div class="overlaps">
          <label for="oh">H:</label>
          <span class="spin big"><input id="oh" value="0.0"><span class="steps"><button aria-label="Increase H"><svg><use href="#up"/></svg></button><button aria-label="Decrease H"><svg><use href="#down"/></svg></button></span></span>
          <label for="ov">V:</label>
          <span class="spin big"><input id="ov" value="0.0"><span class="steps"><button aria-label="Increase V"><svg><use href="#up"/></svg></button><button aria-label="Decrease V"><svg><use href="#down"/></svg></button></span></span>
          <button class="ovl" aria-label="Remove overlaps"><svg><use href="#ovl"/></svg></button>
        </div>
      </fieldset>
      <fieldset>
        <legend>Connector network layout</legend>
        <div class="grid net"><button aria-label="Arrange network"><svg><use href="#net"/></svg></button></div>
      </fieldset>
    </div>
  </aside>

  <div class="snapbar">
    <button class="on" aria-label="Snapping"><svg><use href="#snap"/></svg></button>
    <i></i>
    <button aria-label="Bounding boxes"><svg><use href="#s1"/></svg></button>
    <button aria-label="Box edges"><svg><use href="#s2"/></svg></button>
    <button aria-label="Box corners"><svg><use href="#s3"/></svg></button>
    <button aria-label="Edge midpoints"><svg><use href="#s4"/></svg></button>
    <button aria-label="Box centers"><svg><use href="#s5"/></svg></button>
    <i></i>
    <button class="on" aria-label="Nodes"><svg><use href="#s6"/></svg></button>
    <button aria-label="Paths"><svg><use href="#s7"/></svg></button>
    <button aria-label="Intersections"><svg><use href="#s8"/></svg></button>
    <button aria-label="Cusp nodes"><svg><use href="#s9"/></svg></button>
    <button aria-label="Smooth nodes"><svg><use href="#s10"/></svg></button>
    <button aria-label="Line midpoints"><svg><use href="#s11"/></svg></button>
    <button aria-label="Object centers"><svg><use href="#s12"/></svg></button>
    <button aria-label="Rotation centers"><svg><use href="#s13"/></svg></button>
    <i></i>
    <button aria-label="Page border"><svg><use href="#s14"/></svg></button>
    <button class="on" aria-label="Grids"><svg><use href="#s15"/></svg></button>
    <button class="on" aria-label="Guides"><svg><use href="#s16"/></svg></button>
  </div>
</main>

<div class="palette">
  <div class="swatches" id="swatches">
    <button class="none" aria-label="None"><svg viewBox="0 0 19 20"><path d="M0 0l19 20M19 0l-19 20" stroke="#7a1010" stroke-width="1.500"/></svg></button>
  </div>
  <svg class="h"><use href="#left"/></svg>
</div>
<div class="palscroll">
  <svg class="h dim"><use href="#left"/></svg>
  <div class="htrack"><div class="pthumb"><i></i></div></div>
  <svg class="h"><use href="#right"/></svg>
</div>

<footer class="status">
  <div class="style">
    <span>Fill:</span><b>a</b><span class="fillbox"></span>
    <span>Stroke:</span><b>m</b><em>None</em>
  </div>
  <label class="op" for="op">O:</label>
  <span class="spin opspin"><input id="op" value="100"><span class="steps"><button class="off" aria-label="Increase opacity"><svg><use href="#up"/></svg></button><button aria-label="Decrease opacity"><svg><use href="#down"/></svg></button></span></span>
  <i class="vline"></i>
  <button class="sicon" aria-label="Toggle layer visibility"><svg><use href="#eye"/></svg></button>
  <button class="sicon" aria-label="Toggle layer lock"><svg><use href="#lock"/></svg></button>
  <span class="combo layer"><select aria-label="Current layer"><option>▪Layer 1</option></select><span class="drop"><svg><use href="#down"/></svg></span></span>
  <p class="message"><b>4</b> objects of type <b>Rectangle</b> in layer <b>Layer 1</b>. Click selection to toggle scale/rotation handles.</p>
  <i class="vline"></i>
  <div class="coords"><span>X:</span><span>-352.00</span><span>Y:</span><span>-488.00</span></div>
  <label class="zl" for="zm">Z:</label>
  <span class="spin zspin"><input id="zm" value="50%"><span class="steps"><button aria-label="Zoom in"><svg><use href="#up"/></svg></button><button aria-label="Zoom out"><svg><use href="#down"/></svg></button></span></span>
  <svg class="grip" viewBox="0 0 10 10"><path d="M0 10l10-10M4 10l6-6M8 10l2-2" stroke="#999"/></svg>
</footer>
<script src="palette.js"></script>
</body>
</html>
```
FILE: styles.css
```css
* { box-sizing: border-box; }
body {
  margin: 0; min-height: 100vh; display: flex; flex-direction: column;
  background: #ececec; color: #000; border-bottom: 1px solid #000;
  font: 12px/14px "Liberation Sans", Arial, sans-serif;
  overflow-x: hidden;
}
button { margin: 0; padding: 0; border: 0; background: none; font: inherit; color: inherit; display: flex; align-items: center; justify-content: center; flex: none; }
input, select { font: inherit; color: inherit; margin: 0; border-radius: 0; outline: 0; min-width: 0; }
svg { display: block; flex: none; }
h1, h2, p, ul { margin: 0; padding: 0; }
.defs { position: absolute; }

.titlebar { height: 21px; background: linear-gradient(100deg, #080808 0 18%, #000 18% 21%, #0b0b0b 21% 70%, #111 70% 76%, #030303 76%); display: flex; padding-left: 4px; gap: 3px; color: #fff; }
.logo { width: 13px; height: 13px; }
.titlebar h1 { font-size: 12px; line-height: 18px; font-weight: bold; flex: 1; }
.winbtns { display: flex; height: 13px; margin-right: 2px; border: 1px solid #999; border-top: 0; border-radius: 0 0 4px 4px; overflow: hidden; }
.winbtns button { width: 26px; background: linear-gradient(#555, #222); border-right: 1px solid #999; }
.winbtns .close { width: 42px; background: linear-gradient(#c5614d, #a12a12); border-right: 0; }

.menubar { height: 19px; display: flex; padding: 1px 0 0 7px; gap: 13px; border-bottom: 1px solid #c8c8c8; background: #efefef; font-size: 11px; }

.toolbar { display: flex; align-items: center; padding-left: 2px; border-bottom: 1px solid #c8c8c8; background: #ededed; }
.commands { height: 30px; }
.controls { height: 41px; }
.toolbar > button { width: 26px; height: 26px; }
.toolbar svg { width: 20px; height: 20px; }
.sep { width: 12px; height: 18px; flex: none; background: linear-gradient(#aaa, #aaa) 5px 0 / 1px 100% no-repeat; }
.controls .sep { height: 24px; }
.controls label { width: 20px; text-align: center; font-size: 12px; }
.spin { display: flex; height: 21px; width: 56px; flex: none; }
.spin input { flex: 1; width: 0; border: 1px solid #aaa; background: #fff; padding: 0 0 0 2px; font-size: 12px; }
.steps { display: flex; flex-direction: column; width: 10px; }
.steps button { flex: 1; border: 1px solid #aaa; background: #f2f2f2; }
.steps .off { fill: #aaa; }
.toolbar .steps svg, .steps svg { width: 5px; height: 3px; }
.controls .ratio { width: 30px; }
.combo { display: flex; background: #fff; border: 1px solid #999; flex: none; }
.combo select { appearance: none; flex: 1; border: 0; background: #fff; padding: 0 0 0 4px; }
.drop { width: 18px; display: flex; align-items: center; justify-content: center; background: linear-gradient(#f5f5f5, #cfcfcf); border: 1px solid #888; }
.toolbar .drop svg, .drop svg { width: 7px; height: 4px; }
.units { width: 46px; height: 24px; }
.affect { width: 52px; padding-left: 9px; margin-right: 1px; }
.toolbar .toggle { width: 22px; height: 34px; margin-right: 4px; border: 1px solid #5ba1c2; border-radius: 2px; background: linear-gradient(#cdeaf6, #a9d8ec); }
.toolbar .toggle svg { width: 18px; height: 22px; }

.main { flex: 1; display: flex; align-items: stretch; min-height: 541px; }
.toolbox { width: 34px; padding: 2px 0 0 4px; flex: none; }
.toolbox button { width: 26px; height: 30px; border-radius: 2px; }
.toolbox button.on { background: #bfe3f5; box-shadow: inset 0 0 0 1px #6aaccb; height: 28px; margin: 1px 0; }
.toolbox svg { width: 24px; height: 24px; }
.toolbox svg.more { width: 10px; height: 8px; }

.workspace { flex: 1; min-width: 0; display: grid; grid-template-columns: 17px minmax(0, 1fr) 28px; grid-template-rows: 18px minmax(0, 1fr) 24px; background: #f0f0f0; }
.ruler { width: 100%; height: 100%; font: 8px "Liberation Sans", Arial, sans-serif; overflow: hidden; }
.ruler.tall { font-size: 9px; }
.canvas { width: 100%; height: 100%; background: #fff; }
.zoom1 { width: 18px; height: 18px; margin: 2px 0 0 2px; border: 1px solid #7fb2cc; background: #cbe8f5; z-index: 1; }
.zoom1 svg { width: 16px; height: 16px; }
.vscroll { display: flex; flex-direction: column; align-items: center; padding: 10px 8px 6px 0; }
.v { width: 7px; height: 4px; }
.h { width: 4px; height: 8px; }
.dim { fill: #aaa; }
.vtrack { flex: 1; width: 15px; display: flex; flex-direction: column; justify-content: flex-end; padding-bottom: 10px; }
.vthumb { height: 131px; border: 1px solid #999; background: linear-gradient(90deg, #f5f5f5, #cdcdcd); display: flex; align-items: center; justify-content: center; }
.vthumb i { width: 6px; height: 7px; background: repeating-linear-gradient(#666 0 1px, transparent 1px 3px); }
.hscroll { display: flex; align-items: center; padding: 0 5px 3px 6px; }
.htrack { flex: 1; display: flex; padding: 0 8px; }
.hthumb, .pthumb { width: 437px; height: 15px; border: 1px solid #999; background: linear-gradient(#f8f8f8 40%, #cecece); display: flex; align-items: center; justify-content: center; }
.hthumb i, .pthumb i { width: 7px; height: 6px; background: repeating-linear-gradient(90deg, #666 0 1px, transparent 1px 3px); }
.cms { width: 16px; height: 16px; margin: 3px 0 0 3px; }

.dock { width: 238px; flex: none; border-left: 2px solid #000; border-top: 2px solid #444; font-size: 13px; line-height: 16px; box-shadow: 1px 0 0 #fff; }
.docktitle { height: 22px; display: flex; align-items: center; background: linear-gradient(#b5b5b5, #999); padding-left: 4px; margin-right: 1px; }
.dicon { width: 17px; height: 17px; }
.docktitle h2 { font-size: 13px; font-weight: normal; flex: 1; white-space: nowrap; margin-left: 1px; }
.iconify svg, .dclose svg { width: 12px; height: 12px; }
.dclose { width: 18px; height: 20px; background: #eaf5fa; border: 1px solid #7fb2cc; margin: 0 2px 0 7px; }
.dockbody { padding: 6px 7px 5px 4px; display: flex; flex-direction: column; gap: 6px; border-bottom: 1px solid #fff; }
fieldset { margin: 0; border: 1px solid #aaa; padding: 0; min-width: 0; }
legend { padding: 0 2px; margin-left: 2px; height: 16px; }
.relative { display: flex; align-items: center; height: 25px; padding-left: 7px; justify-content: space-between; }
.picker { position: relative; width: 141px; }
.picker .combo { height: 25px; }
.drop.hot { background: #9cc9de; border: 2px solid #4686a5; }
.popup { position: absolute; z-index: 2; top: 25px; left: 0; width: 141px; list-style: none; background: #fff; border: 1px solid #aaa; padding: 2px 0 0; }
.popup li { height: 24px; line-height: 24px; padding-left: 5px; }
.popup .hover { background: #efefef; }
.cursor { position: absolute; z-index: 3; left: 23px; top: 92px; width: 14px; height: 20px; }
.treat { padding-top: 2px; margin-left: 14px; height: 22px; width: 68px; overflow: hidden; white-space: nowrap; }
.grid { display: flex; gap: 8px; height: 33px; align-items: center; padding-left: 5px; }
.grid svg, .ovl svg { width: 26px; height: 26px; }
.grid.inset { padding-left: 39px; height: 34px; }
.grid.spread { gap: 42px; padding-left: 73px; height: 33px; }
fieldset > .grid:last-child { margin-bottom: 1px; }
fieldset > .grid.spread:last-child { margin-bottom: 0; }
.grid.net { height: 32px; }
.overlaps { display: flex; align-items: center; height: 33px; padding-bottom: 2px; }
.overlaps label { width: 17px; padding-left: 1px; }
.overlaps label + .spin + label { margin-left: 3px; width: 17px; }
.spin.big { width: 59px; height: 24px; }
.big input { font-size: 13px; }
.big .steps { width: 12px; }
.ovl { margin-left: 8px; }

.snapbar { width: 32px; flex: none; padding: 2px 0 0 5px; border-left: 1px solid #fff; }
.snapbar button { width: 22px; height: 26px; }
.snapbar button.on { height: 24px; margin: 1px 0; border: 1px solid #6aaccb; border-radius: 2px; background: #c4e6f6; }
.snapbar svg { width: 20px; height: 20px; }
.snapbar i { display: block; width: 16px; height: 12px; margin-left: 3px; background: linear-gradient(#aaa, #aaa) 0 5px / 100% 1px no-repeat; }

.palette { display: flex; align-items: flex-start; justify-content: space-between; padding-right: 6px; height: 23px; border-bottom: 2px solid #fafafa; }
.palette .h { margin-top: 3px; }
.swatches { display: flex; flex: 1; min-width: 0; margin-right: 8px; overflow: hidden; border-top: 1px solid #000; padding-left: 2px; }
.swatches button { width: 19px; height: 20px; }
.swatches .none { background: #fff; }
.none svg { width: 19px; height: 20px; }
.palscroll { display: flex; align-items: center; height: 16px; padding: 0 20px 0 6px; }
.pthumb { width: 186px; }

.status { height: 28px; display: flex; align-items: center; font-size: 13px; }
.style { display: grid; grid-template-columns: 35px 15px 72px; grid-template-rows: 14px 14px; padding-left: 1px; align-self: stretch; font-size: 11px; line-height: 14px; }
.style b, .style em { text-align: center; font-size: 11px; }
.fillbox { background: #7fbf3f; }
.op { width: 17px; text-align: center; font-size: 11px; }
.opspin { width: 37px; height: 22px; }
.vline { width: 1px; height: 28px; background: #aaa; margin: 0 2px; flex: none; }
.sicon { width: 22px; }
.sicon svg { width: 20px; height: 20px; }
.layer { width: 83px; height: 27px; font-weight: bold; font-size: 12px; }
.message { flex: 1; padding-left: 6px; white-space: nowrap; }
.coords { display: grid; grid-template-columns: 13px 49px; line-height: 14px; font-size: 11px; }
.coords span:nth-child(even) { font-family: "Liberation Mono", monospace; }
.zl { width: 18px; text-align: center; margin-left: 4px; font-size: 12px; }
.zspin { width: 57px; }
.zspin input { padding-left: 7px; }
.grip { width: 10px; height: 10px; align-self: flex-end; margin: 0 2px 4px 6px; }
```
FILE: palette.js
```js
const colors = [
  "#000000", "#1a1a1a", "#333333", "#4d4d4d", "#666666", "#808080", "#999999", "#b3b3b3", "#cccccc", "#e6e6e6", "#ececec", "#f2f2f2", "#f9f9f9", "#ffffff",
  "#800000", "#ff0000", "#808000", "#ffff00", "#008000", "#00ff00", "#008080", "#00ffff", "#000080", "#0000ff", "#800080", "#ff00ff",
  "#2b0000", "#550000", "#800000", "#aa0000", "#d40000", "#ff0000", "#ff2a2a", "#ff5555", "#ff8080", "#ffaaaa", "#ffd5d5",
  "#280b0b", "#501616", "#782121", "#a02c2c", "#c83737", "#d35f5f", "#de8787", "#e9afaf", "#f4d7d7",
  "#241c1c", "#483737", "#6c5353", "#916f6f", "#ac9393", "#c8b7b7", "#e3dbdb",
  "#2b1100", "#552200", "#803300", "#aa4400", "#d45500", "#ff6600", "#ff7f2a", "#ff9955", "#ffb380", "#ffccaa", "#ffe6d5",
  "#28170b", "#502d16"
];
const row = document.getElementById("swatches");
for (const color of colors) {
  const swatch = document.createElement("button");
  swatch.style.background = color;
  swatch.setAttribute("aria-label", color);
  row.append(swatch);
}
```
